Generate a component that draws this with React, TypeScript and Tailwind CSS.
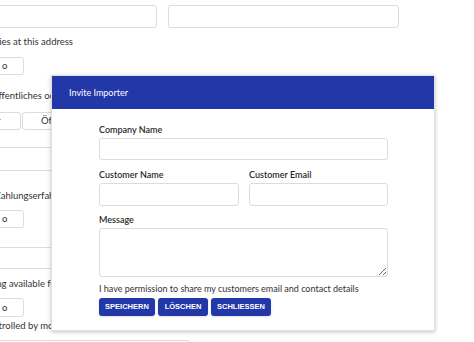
export default function App() {
  const box = "border border-[#dcdcdc] rounded-[3px] bg-white";
  const label = "text-[9px] leading-[12px] font-semibold text-[#2b2b2b]";
  const btn =
    "h-[18px] rounded-[3px] bg-[#2238a8] text-white text-[7.5px] font-bold shadow-sm flex items-center justify-center";

  return (
    <div
      className="relative w-[474px] h-[342px] overflow-hidden bg-white text-[#333]"
      style={{ fontFamily: 'Lato, "Open Sans", sans-serif' }}
    >
      {/* page behind the dialog */}
      <div className="flex flex-col pt-[5px] ml-[-10px]">
        <div className="flex gap-[11px]">
          <div className={`${box} w-[167px] h-[23px]`} />
          <div className={`${box} w-[231px] h-[23px]`} />
        </div>
        <p className="mt-[8px] ml-[7px] text-[9.5px] leading-[12px]">
          lies at this address
        </p>
        <div className={`${box} mt-[9px] w-[34px] h-[18px] text-[9.5px] leading-[16px] pl-[11px]`}>
          o
        </div>
        <p className="mt-[15px] ml-[1px] text-[9.5px] leading-[12px]">
          Öffentliches oder privates Unternehmen
        </p>
        <div className="flex mt-[10px]">
          <div className={`${box} w-[31px] h-[18px] text-[9.5px] leading-[16px] pl-[6px]`}>
            r
          </div>
          <div className={`${box} w-[120px] h-[18px] text-[9.5px] leading-[16px] pl-[18px] ml-[1px]`}>
            Öffentlich
          </div>
        </div>
        <div className={`${box} mt-[17px] w-[200px] h-[24px]`} />
        <p className="mt-[19px] ml-[5px] text-[9.5px] leading-[12px]">
          Zahlungserfahrung
        </p>
        <div className={`${box} mt-[8px] w-[34px] h-[18px] text-[9.5px] leading-[16px] pl-[11px]`}>
          o
        </div>
        <div className={`${box} mt-[19px] w-[200px] h-[22px]`} />
        <p className="mt-[9px] ml-[4px] text-[9.5px] leading-[12px]">
          ing available for
        </p>
        <div className={`${box} mt-[8px] w-[34px] h-[19px] text-[9.5px] leading-[17px] pl-[11px]`}>
          o
        </div>
        <p className="mt-[3px] ml-[-2px] text-[9.5px] leading-[12px]">
          ontrolled by more
        </p>
        <div className={`${box} mt-[8px] w-[200px] h-[22px]`} />
      </div>

      {/* dialog */}
      <div className="absolute left-[51px] top-[75px] w-[384px] h-[256px] bg-white border border-[#e2e2e2] shadow-[0_1px_4px_rgba(0,0,0,0.25)]">
        <div className="h-[33px] bg-[#2238a8] flex items-center pl-[17px]">
          <span className="text-white text-[9px]">Invite Importer</span>
        </div>
        <div className="pl-[47px] pr-[47px] pt-[15px]">
          <div className={label}>Company Name</div>
          <div className={`${box} mt-[2px] w-[289px] h-[22px]`} />
          <div className="flex gap-[10px] mt-[9px]">
            <div>
              <div className={label}>Customer Name</div>
              <div className={`${box} mt-[2px] w-[140px] h-[23px]`} />
            </div>
            <div>
              <div className={label}>Customer Email</div>
              <div className={`${box} mt-[2px] w-[139px] h-[23px]`} />
            </div>
          </div>
          <div className={`${label} mt-[8px]`}>Message</div>
          <textarea
            className={`${box} block mt-[2px] w-[289px] h-[49px] resize-y`}
          />
          <div className="text-[9px] mt-[6px] leading-[12px]">
            I have permission to share my customers email and contact details
          </div>
          <div className="flex gap-[3px] mt-[3px]">
            <button
              className={`${btn} w-[56px]`}
              style={{ fontFamily: '"Liberation Sans", sans-serif' }}
            >
              SPEICHERN
            </button>
            <button
              className={`${btn} w-[50px]`}
              style={{ fontFamily: '"Liberation Sans", sans-serif' }}
            >
              LÖSCHEN
            </button>
            <button
              className={`${btn} w-[60px]`}
              style={{ fontFamily: '"Liberation Sans", sans-serif' }}
            >
              SCHLIESSEN
            </button>
          </div>
        </div>
      </div>
    </div>
  );
}
